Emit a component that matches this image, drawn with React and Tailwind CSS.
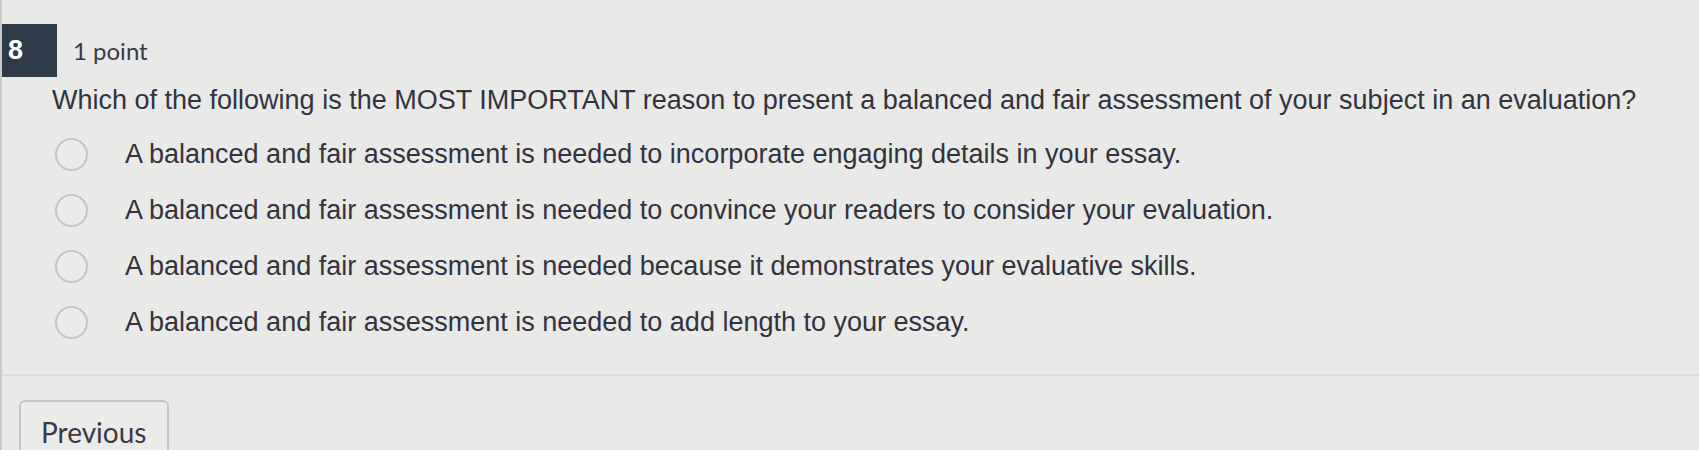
import React from 'react';

const options = [
  'A balanced and fair assessment is needed to incorporate engaging details in your essay.',
  'A balanced and fair assessment is needed to convince your readers to consider your evaluation.',
  'A balanced and fair assessment is needed because it demonstrates your evaluative skills.',
  'A balanced and fair assessment is needed to add length to your essay.',
];

const Radio = () => (
  <span className="block w-[33px] h-[33px] rounded-full border-2 border-[#c6c6c4] bg-[#ecebe9] shrink-0" />
);

export default function App() {
  return (
    <div className="w-[1699px] h-[450px] overflow-hidden bg-[#e9e9e7] border-l-2 border-[#c9c9c7] text-[#33333f]">
      <div className="flex items-center pt-[24px]">
        <div className="w-[55px] h-[53px] bg-[#2d3a47] flex items-center pl-[6px] text-white text-[27px] font-bold font-['Liberation_Sans',sans-serif]">
          8
        </div>
        <div className="ml-[16px] text-[24px] font-['Lato',sans-serif] text-[#3a3a48]">1 point</div>
      </div>

      <div className="pl-[50px] pt-[5px] text-[27px] leading-[36px] font-['Liberation_Sans',Arial,sans-serif]">
        Which of the following is the MOST IMPORTANT reason to present a balanced and fair assessment of your subject in an evaluation?
      </div>

      <div className="mt-[20px] pl-[53px] flex flex-col gap-[23px] font-['Liberation_Sans',Arial,sans-serif]">
        {options.map((o) => (
          <label key={o} className="flex items-center gap-[37px] h-[33px] text-[27px]">
            <Radio />
            <span>{o}</span>
          </label>
        ))}
      </div>

      <div className="mt-[35px] border-t-2 border-[#dcdcda]" />

      <div className="pl-[17px] pt-[24px]">
        <button className="w-[150px] h-[70px] rounded-t-[6px] border-2 border-b-0 border-[#c6c6c4] bg-[#ebebe9] text-left pl-[20px] pb-[8px] text-[28px] font-['Lato',sans-serif] text-[#3a3a46]">
          Previous
        </button>
      </div>
    </div>
  );
}
